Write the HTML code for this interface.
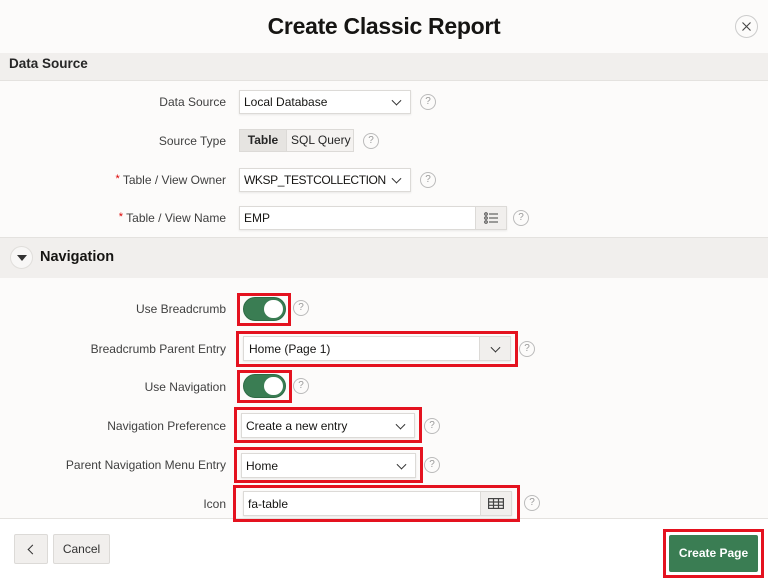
<!DOCTYPE html>
<html><head><style>
*{box-sizing:border-box;margin:0;padding:0}
body{width:768px;height:580px;position:relative;overflow:hidden;background:#fcfbfa;font-family:"Liberation Sans",sans-serif;color:#262626;font-size:12px}
.a{position:absolute}
.lbl{position:absolute;right:542px;text-align:right;font-size:12px;color:#404040;white-space:nowrap}
.sel{position:absolute;background:#fff;border:1px solid #dcdad7;box-shadow:0 1px 2px rgba(0,0,0,.08);font-size:12px;padding-left:4px;display:flex;align-items:center;color:#161513}
.chev{position:absolute;right:10px;top:50%;width:7px;height:7px;border-right:1.3px solid #333;border-bottom:1.3px solid #333;transform:translateY(-70%) rotate(45deg)}
.help{position:absolute;width:16px;height:16px;border:1px solid #bbb;border-radius:50%;font-size:10px;color:#999;text-align:center;line-height:14px}
.red{position:absolute;border:3px solid #e4121f}
.tog{position:absolute;width:43px;height:24px;background:#3a7d53;border-radius:12px;border:1px solid #2e6b45}
.tog:after{content:"";position:absolute;right:2px;top:2px;width:19px;height:18px;background:#fff;border-radius:9px}
.btn{position:absolute;background:#f1efed;border-left:1px solid #dcdad7;display:flex;align-items:center;justify-content:center}
</style></head><body>
<div class="a" style="left:0;top:0;width:768px;height:53px;text-align:center;font-size:23px;font-weight:bold;line-height:53px;color:#161513;letter-spacing:-0.3px">Create Classic Report</div>
<div class="a" style="left:735px;top:15px;width:23px;height:23px;border:1px solid #ccc;border-radius:50%"><svg width="21" height="21" style="position:absolute;left:0;top:0"><path d="M6.5 6.5L14.5 14.5M14.5 6.5L6.5 14.5" stroke="#444" stroke-width="1.1"/></svg></div>
<div class="a" style="left:0;top:53px;width:768px;height:28px;background:#f1efed;border-bottom:1px solid #e4e2df;font-weight:bold;font-size:13.5px;padding:3px 0 0 9px">Data Source</div>

<div class="lbl" style="top:95px">Data Source</div>
<div class="sel" style="left:239px;top:90px;width:172px;height:24px">Local Database<span class="chev"></span></div>
<div class="help" style="left:420px;top:94px">?</div>

<div class="lbl" style="top:134px">Source Type</div>
<div class="a" style="left:239px;top:129px;width:115px;height:23px;border:1px solid #dcdad7;background:#f4f2f0;font-size:12px;line-height:21px"><span style="display:inline-block;width:47px;background:#e6e4e1;text-align:center;font-weight:bold;border-right:1px solid #dcdad7">Table</span><span style="padding-left:4px">SQL Query</span></div>
<div class="help" style="left:363px;top:133px">?</div>

<div class="lbl" style="top:173px"><span style="color:#d00;vertical-align:top;font-size:11px">*</span> Table / View Owner</div>
<div class="sel" style="left:239px;top:168px;width:172px;height:24px;letter-spacing:-0.4px">WKSP_TESTCOLLECTION<span class="chev"></span></div>
<div class="help" style="left:420px;top:172px">?</div>

<div class="lbl" style="top:211px"><span style="color:#d00;vertical-align:top;font-size:11px">*</span> Table / View Name</div>
<div class="sel" style="left:239px;top:206px;width:268px;height:24px">EMP<div class="btn" style="right:0;top:0;width:31px;height:22px"><svg width="14" height="12"><g fill="none" stroke="#444"><circle cx="2" cy="2" r="1.3"/><circle cx="2" cy="6" r="1.3"/><circle cx="2" cy="10" r="1.3"/><path d="M5 2H14M5 6H14M5 10H14"/></g></svg></div></div>
<div class="help" style="left:513px;top:210px">?</div>

<div class="a" style="left:0;top:237px;width:768px;height:41px;background:#f1efed;border-top:1px solid #e4e2df"></div>
<div class="a" style="left:10px;top:246px;width:23px;height:23px;border-radius:50%;background:#f8f7f6;border:1px solid #e0dedb"><div style="position:absolute;left:6px;top:8px;border-left:5px solid transparent;border-right:5px solid transparent;border-top:6px solid #333"></div></div>
<div class="a" style="left:40px;top:249px;font-size:14.5px;font-weight:bold;color:#161513">Navigation</div>

<div class="lbl" style="top:302px">Use Breadcrumb</div>
<div class="red" style="left:237px;top:293px;width:54px;height:33px"></div>
<div class="tog" style="left:243px;top:297px"></div>
<div class="help" style="left:293px;top:300px">?</div>

<div class="lbl" style="top:342px">Breadcrumb Parent Entry</div>
<div class="red" style="left:236px;top:331px;width:282px;height:36px"></div>
<div class="sel" style="left:243px;top:336px;width:268px;height:25px;padding-left:5px">Home (Page 1)<div class="btn" style="right:0;top:0;width:31px;height:23px"><span class="chev" style="right:11px"></span></div></div>
<div class="help" style="left:519px;top:341px">?</div>

<div class="lbl" style="top:380px">Use Navigation</div>
<div class="red" style="left:237px;top:370px;width:55px;height:33px"></div>
<div class="tog" style="left:243px;top:374px"></div>
<div class="help" style="left:293px;top:378px">?</div>

<div class="lbl" style="top:419px">Navigation Preference</div>
<div class="red" style="left:234px;top:407px;width:188px;height:36px"></div>
<div class="sel" style="left:241px;top:413px;width:174px;height:25px">Create a new entry<span class="chev"></span></div>
<div class="help" style="left:424px;top:418px">?</div>

<div class="lbl" style="top:458px">Parent Navigation Menu Entry</div>
<div class="red" style="left:234px;top:447px;width:189px;height:36px"></div>
<div class="sel" style="left:241px;top:453px;width:175px;height:25px">Home<span class="chev"></span></div>
<div class="help" style="left:424px;top:457px">?</div>

<div class="a" style="left:0;top:518px;width:768px;height:62px;background:#fff;border-top:1px solid #e4e2df"></div>
<div class="lbl" style="top:497px">Icon</div>
<div class="red" style="left:233px;top:485px;width:287px;height:37px"></div>
<div class="sel" style="left:243px;top:491px;width:269px;height:25px">fa-table<div class="btn" style="right:0;top:0;width:31px;height:23px"><svg width="16" height="11"><g fill="none" stroke="#444" stroke-width="1.2"><rect x=".6" y=".6" width="14.8" height="9.8"/><path d="M.6 4H15.4M.6 7.3H15.4M5.5 .6V10.4M10.5 .6V10.4"/></g></svg></div></div>
<div class="help" style="left:524px;top:495px">?</div>

<div class="a" style="left:14px;top:534px;width:34px;height:30px;background:#f1efed;border:1px solid #dcdad7;border-radius:2px"><div style="position:absolute;left:14px;top:11px;width:7px;height:7px;border-left:1.3px solid #333;border-bottom:1.3px solid #333;transform:rotate(45deg)"></div></div>
<div class="a" style="left:53px;top:534px;width:57px;height:30px;background:#f1efed;border:1px solid #dcdad7;border-radius:2px;text-align:center;line-height:28px;font-size:12px;color:#333">Cancel</div>

<div class="red" style="left:663px;top:529px;width:101px;height:49px"></div>
<div class="a" style="left:669px;top:535px;width:89px;height:37px;background:#3a7d53;border-radius:2px;color:#fff;font-weight:bold;font-size:12px;text-align:center;line-height:37px">Create Page</div>
</body></html>
